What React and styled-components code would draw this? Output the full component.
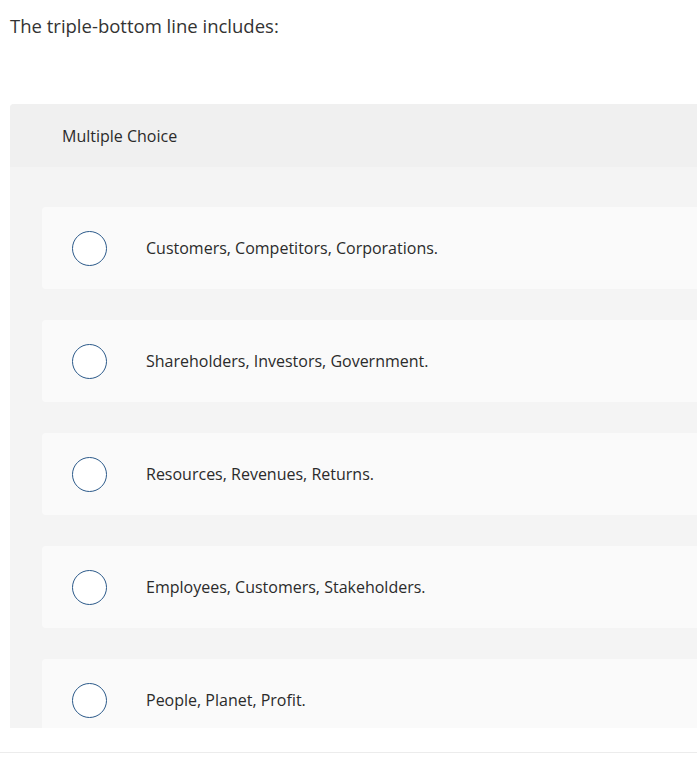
import React from "react";
import styled, { createGlobalStyle } from "styled-components";

const Global = createGlobalStyle`
  html, body { margin: 0; padding: 0; background: #fff; overflow: hidden; }
  body { font-family: "Open Sans", Lato, Arial, sans-serif; color: #333; }
`;

const Page = styled.div`
  width: 697px;
  height: 761px;
  overflow: hidden;
  display: flex;
  flex-direction: column;
`;

const Question = styled.p`
  margin: 0;
  padding: 14px 0 0 10px;
  height: 104px;
  box-sizing: border-box;
  font-size: 18.5px;
  line-height: 24px;
  color: #333;
  flex-shrink: 0;
`;

const Panel = styled.section`
  margin-left: 10px;
  width: 720px;
  height: 624px;
  border-radius: 4px 0 0 0;
  overflow: hidden;
  background: #f4f4f4;
  flex-shrink: 0;
`;

const PanelHeader = styled.header`
  height: 63px;
  background: #f0f0f0;
  display: flex;
  align-items: center;
  padding-left: 52px;
  font-size: 16px;
  color: #2b2b2b;
`;

const Choices = styled.ul`
  list-style: none;
  margin: 0;
  padding: 40px 0 0 32px;
  display: flex;
  flex-direction: column;
  gap: 31px;
`;

const Choice = styled.li`
  height: 82px;
  flex-shrink: 0;
  background: #fafafa;
  border-radius: 4px 0 0 4px;
  display: flex;
  align-items: center;
  padding-left: 30px;
  font-size: 16px;
  color: #2b2b2b;
`;

const Radio = styled.span`
  width: 35px;
  height: 35px;
  box-sizing: border-box;
  border: 1.5px solid #2c5a8a;
  border-radius: 50%;
  background: #fff;
  flex-shrink: 0;
  margin-right: 39px;
`;

const Rule = styled.hr`
  margin: 24px 0 0;
  border: 0;
  border-top: 1px solid #ececec;
  height: 0;
`;

const options = [
  "Customers, Competitors, Corporations.",
  "Shareholders, Investors, Government.",
  "Resources, Revenues, Returns.",
  "Employees, Customers, Stakeholders.",
  "People, Planet, Profit.",
];

export default function App() {
  return (
    <Page>
      <Global />
      <Question>The triple-bottom line includes:</Question>
      <Panel>
        <PanelHeader>Multiple Choice</PanelHeader>
        <Choices>
          {options.map((o) => (
            <Choice key={o}>
              <Radio />
              <span>{o}</span>
            </Choice>
          ))}
        </Choices>
      </Panel>
      <Rule />
    </Page>
  );
}
